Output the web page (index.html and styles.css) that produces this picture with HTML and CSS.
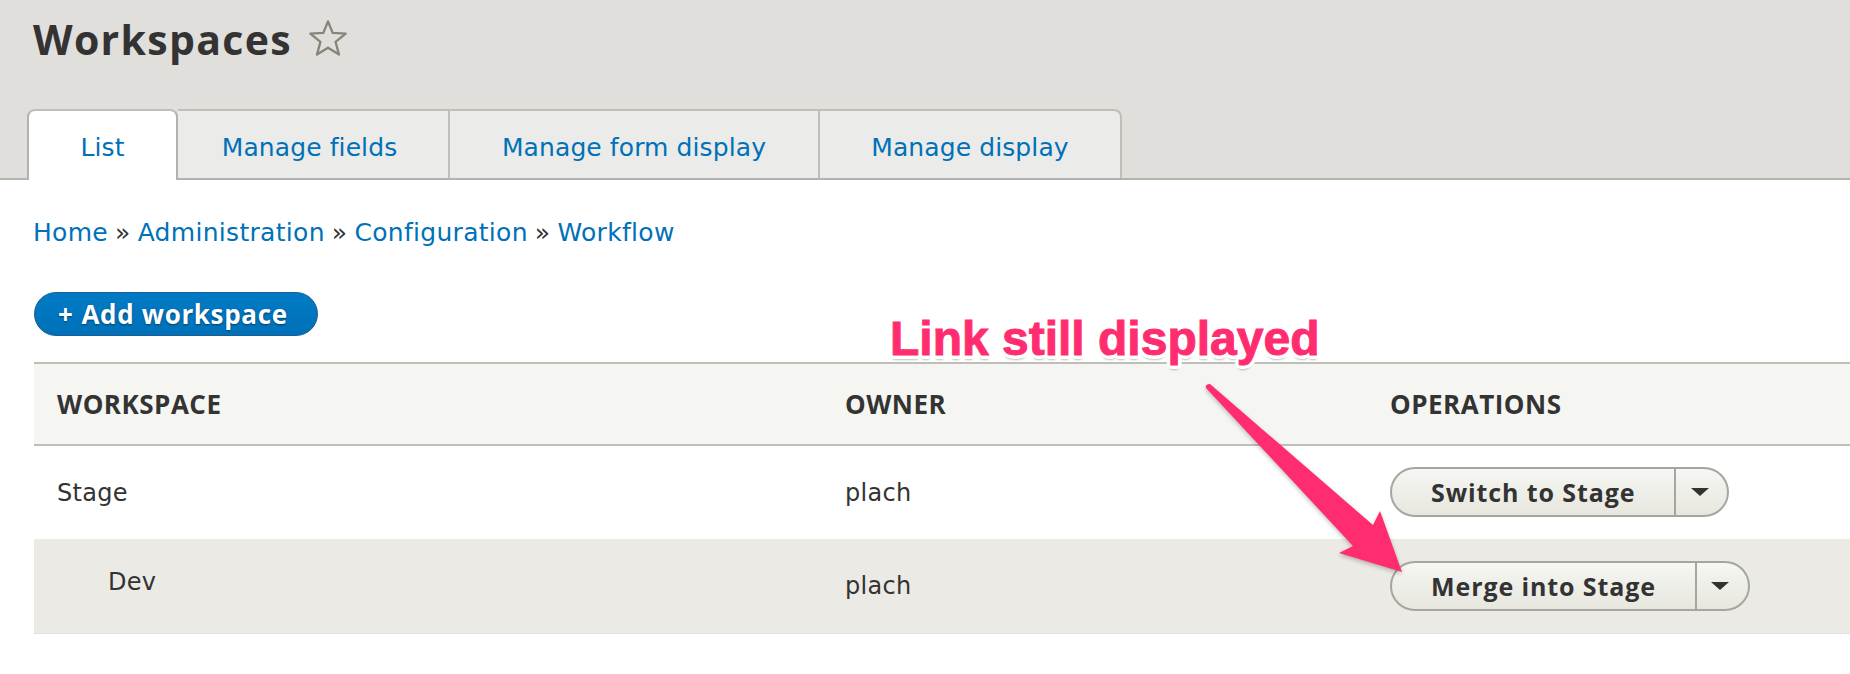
FILE: index.html
```html
<!DOCTYPE html>
<html lang="en">
<head>
<meta charset="utf-8">
<title>Workspaces</title>
<link rel="stylesheet" href="styles.css">
</head>
<body>
<header class="page-head">
  <div class="title-row">
    <h1 class="title">Workspaces</h1>
    <svg class="star" viewBox="0 0 38 37" aria-hidden="true"><path d="M19 2.2 L23.4 13.2 L35.8 13.9 L26.2 21.8 L29.5 33.8 L19 27.2 L8.5 33.8 L11.8 21.8 L2.2 13.9 L14.6 13.2 Z"/></svg>
  </div>
  <nav class="tabs">
    <a class="tab tab-active tab-list">List</a>
    <a class="tab tab-fields">Manage fields</a>
    <a class="tab tab-form">Manage form display</a>
    <a class="tab tab-display">Manage display</a>
  </nav>
</header>
<main class="content">
  <nav class="crumbs"><a>Home</a><span class="sep">»</span><a>Administration</a><span class="sep">»</span><a>Configuration</a><span class="sep">»</span><a>Workflow</a></nav>
  <a class="add-btn"><span class="plus">+</span>Add workspace</a>
  <table class="grid">
    <thead>
      <tr><th class="col-a">Workspace</th><th class="col-b">Owner</th><th>Operations</th></tr>
    </thead>
    <tbody>
      <tr>
        <td>Stage</td>
        <td>plach</td>
        <td><div class="drop drop-first"><span class="drop-main">Switch to Stage</span><span class="drop-arrow"><i class="tri"></i></span></div></td>
      </tr>
      <tr class="row-alt">
        <td><div class="indent">Dev</div></td>
        <td>plach</td>
        <td><div class="drop"><span class="drop-main">Merge into Stage</span><span class="drop-arrow"><i class="tri"></i></span></div></td>
      </tr>
    </tbody>
  </table>
</main>
<div class="note">Link still displayed</div>
<svg class="arrow" viewBox="0 0 1850 674" aria-hidden="true"><path d="M1206 388 Q1205 384 1210 384 L1373 525 L1380 511 L1402 572 L1339 553 L1353 546 Z"/></svg>
</body>
</html>
```

FILE: styles.css
```css
* { box-sizing: border-box; }
html, body { margin: 0; padding: 0; }
body {
  width: 1850px;
  height: 674px;
  overflow: hidden;
  background: #fff;
  color: #333;
  font-family: "DejaVu Sans", sans-serif;
  font-size: 25px;
  position: relative;
}
.page-head {
  height: 180px;
  background: #e0dfdb;
  border-bottom: 2px solid #b3b2ad;
  padding-left: 27px;
  display: flex;
  flex-direction: column;
}
.title-row {
  display: flex;
  align-items: flex-start;
  height: 111px;
  padding: 14px 0 0 6px;
}
.title {
  margin: 0;
  font-family: "Open Sans", sans-serif;
  font-size: 41px;
  line-height: 50px;
  font-weight: 700;
  color: #333;
  letter-spacing: 1.3px;
}
.star { width: 40px; height: 39px; margin: 5px 0 0 16px; }
.star path { fill: none; stroke: #85857a; stroke-width: 2.2; stroke-linejoin: round; }
.tabs { display: flex; height: 69px; }
.tab {
  display: flex;
  align-items: center;
  justify-content: center;
  height: 69px;
  padding-top: 5px;
  background: #ebebe9;
  color: #0071b8;
  border-top: 2px solid #bfbfba;
  border-right: 2px solid #bfbfba;
  letter-spacing: 0.1px;
}
.tab-list { width: 151px; }
.tab-fields { width: 272px; padding-right: 7px; }
.tab-form { width: 370px; }
.tab-display { width: 302px; border-top-right-radius: 8px; }
.tab-active {
  background: #fff;
  border-left: 2px solid #b3b2ad;
  border-right: 2px solid #b3b2ad;
  border-top-left-radius: 8px;
  border-top-right-radius: 8px;
  height: 71px;
  padding-bottom: 2px;
  position: relative;
  z-index: 1;
}
.content { padding: 0 0 0 34px; }
.crumbs {
  display: flex;
  height: 36px;
  margin-top: 34px;
  margin-left: -1px;
  align-items: center;
  color: #0071b8;
  font-size: 25px;
  letter-spacing: 0.3px;
  white-space: nowrap;
}
.sep { color: #333; margin: 0 7px; }
.add-btn {
  display: flex;
  align-items: center;
  width: 284px;
  height: 44px;
  margin-top: 42px;
  padding: 0 0 0 23px;
  border: 1px solid #1e5c90;
  border-radius: 22px;
  background: linear-gradient(#007bc6, #0071b8);
  color: #fff;
  font-family: "Open Sans", sans-serif;
  font-weight: 700;
  font-size: 26px;
  letter-spacing: 0.65px;
  text-shadow: 0 1px 2px #00406b;
  white-space: nowrap;
}
.plus { margin-right: 8px; }
.grid {
  width: 1816px;
  margin-top: 26px;
  border-collapse: collapse;
  table-layout: fixed;
}
.grid th {
  height: 82px;
  padding: 0 0 0 23px;
  background: #f5f5f2;
  border-top: 2px solid #bfbfba;
  border-bottom: 2px solid #bfbfba;
  text-align: left;
  font-family: "Open Sans", sans-serif;
  font-size: 26px;
  font-weight: 700;
  letter-spacing: 0.5px;
  text-transform: uppercase;
}
.grid td {
  height: 94px;
  padding: 0 0 0 23px;
  font-size: 24px;
  letter-spacing: 0.3px;
}
.col-a { width: 788px; }
.col-b { width: 545px; }
.row-alt td { background: #ebeae4; border-bottom: 1px solid #e3e2dc; }
.indent { padding: 0 0 8px 51px; }
.drop {
  display: inline-flex;
  height: 50px;
  border: 2px solid #a6a6a0;
  border-radius: 25px;
  background: linear-gradient(#f6f6f3, #e7e7df);
  font-family: "Open Sans", sans-serif;
  font-weight: 700;
  font-size: 25px;
  letter-spacing: 0.9px;
  vertical-align: middle;
}
.drop-first { margin-bottom: 2px; }
.drop-main {
  display: flex;
  align-items: center;
  padding: 0 39px;
  border-right: 2px solid #a6a6a0;
}
.drop-arrow {
  display: flex;
  align-items: center;
  justify-content: center;
  width: 51px;
  padding-right: 4px;
}
.tri {
  width: 0;
  height: 0;
  border-left: 9px solid transparent;
  border-right: 9px solid transparent;
  border-top: 8px solid #333;
}
.note {
  position: absolute;
  left: 890px;
  top: 312px;
  font-family: "Liberation Sans", sans-serif;
  font-size: 48px;
  line-height: 54px;
  font-weight: 700;
  color: #ff2d6f;
  white-space: nowrap;
  -webkit-text-stroke: 1px #ff2d6f;
  text-shadow: 4px 0 0 #fff, -4px 0 0 #fff, 0 4px 0 #fff, 0 -4px 0 #fff, 3px 3px 0 #fff, -3px 3px 0 #fff, 3px -3px 0 #fff, -3px -3px 0 #fff, 0 5px 2px rgba(0,0,0,.25);
}
.arrow {
  position: absolute;
  left: 0;
  top: 0;
  width: 1850px;
  height: 674px;
  pointer-events: none;
  filter: drop-shadow(0 2px 2px rgba(0,0,0,.25));
}
.arrow path { fill: #ff2d6f; }
```
